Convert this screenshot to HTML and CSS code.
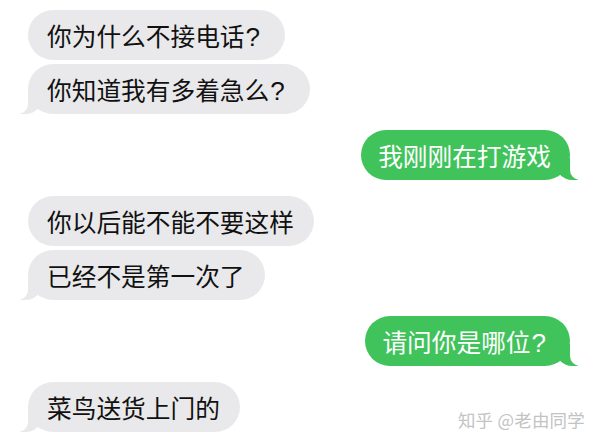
FILE: index.html
```html
<!DOCTYPE html>
<html lang="zh-CN">
<head>
<meta charset="utf-8">
<link rel="stylesheet" href="styles.css">
</head>
<body>
<div class="chat">
  <div class="group">
    <div class="msg in">你为什么不接电话<span class="q">?</span></div>
    <div class="msg in tail">你知道我有多着急么<span class="q">?</span></div>
  </div>
  <div class="group">
    <div class="msg out tail">我刚刚在打游戏</div>
  </div>
  <div class="group">
    <div class="msg in">你以后能不能不要这样</div>
    <div class="msg in tail">已经不是第一次了</div>
  </div>
  <div class="group">
    <div class="msg out tail">请问你是哪位<span class="q">?</span></div>
  </div>
  <div class="group last">
    <div class="msg in tail">菜鸟送货上门的</div>
    <div class="watermark">知乎 @老由同学</div>
  </div>
</div>
</body>
</html>
```

FILE: styles.css
```css
html, body {
  margin: 0;
  padding: 0;
  background: #ffffff;
}
body {
  width: 600px;
  height: 446px;
  overflow: hidden;
  font-family: "Noto Sans CJK SC", "Noto Sans", sans-serif;
}
.chat {
  display: flex;
  flex-direction: column;
  gap: 16px;
  padding: 10px 30px 0 28px;
}
.group {
  display: flex;
  flex-direction: column;
  gap: 4px;
}
.group.last {
  flex-direction: row;
  align-items: center;
  justify-content: space-between;
}
.msg {
  position: relative;
  height: 50px;
  line-height: 50px;
  padding: 0 20px 0 19px;
  border-radius: 25px;
  font-size: 24.7px;
  white-space: nowrap;
}
.q {
  font-family: "Liberation Sans", "Noto Sans", sans-serif;
  font-size: 26px;
  padding: 0 5px 0 1px;
}
.in {
  align-self: flex-start;
  background: #e9e9eb;
  color: #111111;
}
.out {
  align-self: flex-end;
  background: #41c35c;
  color: #ffffff;
  padding: 0 19px 0 17px;
}
.msg.tail::before,
.msg.tail::after {
  content: "";
  position: absolute;
  bottom: 0;
  height: 22px;
}
.in.tail::before {
  left: -8px;
  width: 22px;
  background: #e9e9eb;
  border-bottom-right-radius: 16px;
}
.in.tail::after {
  left: -12px;
  width: 12px;
  background: #ffffff;
  border-bottom-right-radius: 10px;
}
.out.tail::before {
  right: -8px;
  width: 22px;
  background: #41c35c;
  border-bottom-left-radius: 16px;
}
.out.tail::after {
  right: -12px;
  width: 12px;
  background: #ffffff;
  border-bottom-left-radius: 10px;
}
.watermark {
  margin-top: 24px;
  margin-right: -15px;
  font-size: 17.5px;
  color: #c3c3c3;
  letter-spacing: 0.2px;
  text-shadow: 0 0 1px #ffffff;
}
```
